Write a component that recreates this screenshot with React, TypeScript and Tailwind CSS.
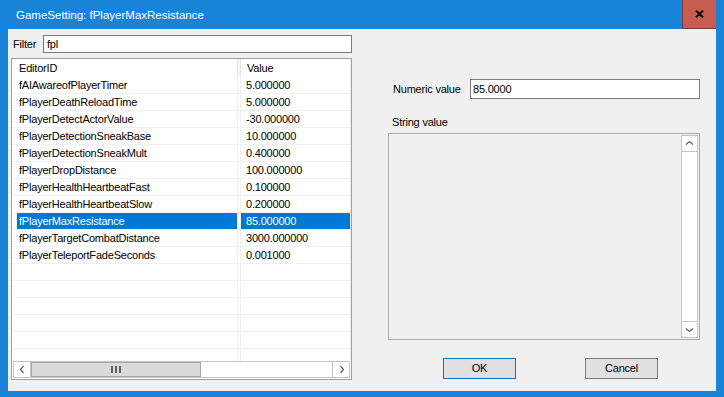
import React from "react";

// Righe della lista GameSetting filtrate
const rows: [string, string][] = [
  ["fAIAwareofPlayerTimer", "5.000000"],
  ["fPlayerDeathReloadTime", "5.000000"],
  ["fPlayerDetectActorValue", "-30.000000"],
  ["fPlayerDetectionSneakBase", "10.000000"],
  ["fPlayerDetectionSneakMult", "0.400000"],
  ["fPlayerDropDistance", "100.000000"],
  ["fPlayerHealthHeartbeatFast", "0.100000"],
  ["fPlayerHealthHeartbeatSlow", "0.200000"],
  ["fPlayerMaxResistance", "85.000000"],
  ["fPlayerTargetCombatDistance", "3000.000000"],
  ["fPlayerTeleportFadeSeconds", "0.001000"],
];

const SELECTED = 8;
const EMPTY_ROWS = 6;

const font = { fontFamily: '"Liberation Sans", Arial, sans-serif' };

function Chevron({ dir }: { dir: "left" | "right" | "up" | "down" }) {
  const d = {
    left: "M5.5 1 L2.5 4.5 L5.5 8",
    right: "M3.5 1 L6.5 4.5 L3.5 8",
    up: "M1 5.5 L4.5 2.5 L8 5.5",
    down: "M1 3.5 L4.5 6.5 L8 3.5",
  }[dir];
  return (
    <svg width="9" height="9" viewBox="0 0 9 9" className="block">
      <path d={d} fill="none" stroke="#606060" strokeWidth="1.2" />
    </svg>
  );
}

function ListRow({ name, value, selected }: { name: string; value: string; selected?: boolean }) {
  return (
    <div className="flex h-[17px] shrink-0 border-b border-[#f0f0f0]">
      <div
        className={
          "ml-[5px] w-[220px] pl-[2px] leading-[16px] truncate " +
          (selected ? "bg-[#0078d7] text-white" : "text-black")
        }
      >
        {name}
      </div>
      <div className="w-[4px] border-l border-r border-[#f0f0f0] bg-white" />
      <div
        className={
          "flex-1 pl-[5px] leading-[16px] border-r border-[#f0f0f0] " +
          (selected ? "bg-[#0078d7] text-white" : "text-black")
        }
      >
        {value}
      </div>
    </div>
  );
}

function HScrollbar() {
  return (
    <div className="mx-[1px] mb-[1px] h-[17px] shrink-0 border border-[#c4c4c4] bg-white flex">
      <div className="w-[17px] border-r border-[#c4c4c4] flex items-center justify-center">
        <Chevron dir="left" />
      </div>
      <div className="w-[170px] bg-[#dadada] border border-[#a6a6a6] flex items-center justify-center gap-[2px]">
        <span className="w-[2px] h-[7px] bg-[#606060]" />
        <span className="w-[2px] h-[7px] bg-[#606060]" />
        <span className="w-[2px] h-[7px] bg-[#606060]" />
      </div>
      <div className="flex-1" />
      <div className="w-[17px] border-l border-[#c4c4c4] flex items-center justify-center">
        <Chevron dir="right" />
      </div>
    </div>
  );
}

export default function App() {
  return (
    <div
      className="w-[724px] h-[397px] bg-[#1883d7] flex flex-col overflow-hidden text-[11px] tracking-[-0.2px]"
      style={font}
    >
      {/* Barra del titolo */}
      <div className="h-[29px] shrink-0 flex items-start">
        <div className="pl-[16px] pt-[8px] text-white text-[11.5px] tracking-normal leading-[14px] flex-1">
          GameSetting: fPlayerMaxResistance
        </div>
        <div className="w-[34px] h-[29px] mr-[8px] bg-[#c75c50] border-l border-b border-[#7a3a33] flex items-center justify-center">
          <svg width="9" height="8" viewBox="0 0 9 8">
            <path d="M1 0.8 L8 7.2 M8 0.8 L1 7.2" stroke="#000" strokeWidth="2" />
          </svg>
        </div>
      </div>

      {/* Corpo della finestra */}
      <div className="flex-1 mx-[8px] mb-[6px] bg-[#f0f0f0] flex">
        {/* Colonna sinistra: filtro + lista */}
        <div className="w-[344px] pl-[3px] pt-[6px] flex flex-col">
          <div className="flex items-center h-[18px]">
            <span className="w-[32px] pl-[2px] text-black">Filter</span>
            <div className="w-[310px] h-[18px] bg-white border border-[#7a7a7a] px-[3px] leading-[16px] text-black">
              fpl
            </div>
          </div>

          <div className="mt-[5px] w-[341px] h-[322px] border border-[#a0a0a0] bg-white flex flex-col overflow-hidden">
            {/* Intestazione */}
            <div className="flex h-[18px] shrink-0 text-black">
              <div className="w-[225px] pl-[7px] leading-[18px]">EditorID</div>
              <div className="w-[4px] border-l border-r border-[#e5e5e5] bg-[#f7f7f7]" />
              <div className="flex-1 pl-[6px] leading-[18px] border-r border-[#f0f0f0]">Value</div>
            </div>
            <div className="flex-1 flex flex-col overflow-hidden">
              {rows.map((r, i) => (
                <ListRow key={r[0]} name={r[0]} value={r[1]} selected={i === SELECTED} />
              ))}
              {Array.from({ length: EMPTY_ROWS }).map((_, i) => (
                <ListRow key={"e" + i} name="" value="" />
              ))}
            </div>
            <HScrollbar />
          </div>
        </div>

        {/* Colonna destra */}
        <div className="ml-[36px] w-[312px] flex flex-col">
          <div className="mt-[50px] flex items-center h-[20px]">
            <span className="w-[82px] pl-[5px] text-black">Numeric value</span>
            <div className="w-[230px] h-[20px] bg-white border border-[#7a7a7a] px-[2px] leading-[18px] text-black">
              85.0000
            </div>
          </div>
          <div className="mt-[16px] pl-[4px] leading-[14px] text-black">String value</div>
          <div className="mt-[4px] w-[312px] h-[207px] border border-[#adadad] bg-[#f0f0f0] flex justify-end p-[1px]">
            <div className="w-[17px] h-full bg-white border border-[#c4c4c4] flex flex-col justify-between">
              <div className="h-[16px] border-b border-[#c4c4c4] flex items-center justify-center">
                <Chevron dir="up" />
              </div>
              <div className="h-[16px] border-t border-[#c4c4c4] flex items-center justify-center">
                <Chevron dir="down" />
              </div>
            </div>
          </div>
          <div className="mt-[18px] flex">
            <div className="ml-[55px] w-[73px] h-[21px] border border-[#0078d7] bg-[#e1e1e1] flex items-center justify-center text-black">
              OK
            </div>
            <div className="ml-[69px] w-[73px] h-[21px] border border-[#7a7a7a] bg-[#e1e1e1] flex items-center justify-center text-black">
              Cancel
            </div>
          </div>
        </div>
      </div>
    </div>
  );
}
